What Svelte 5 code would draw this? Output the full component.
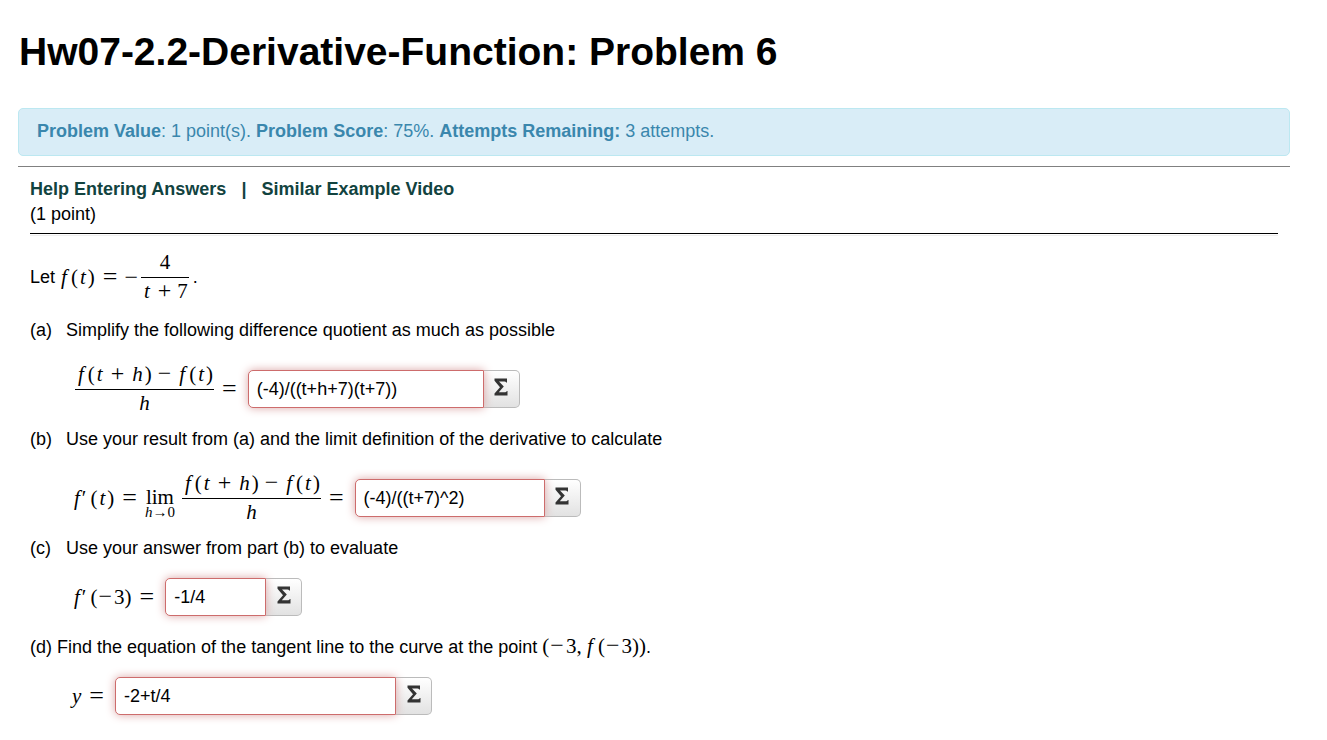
<script lang="ts">
  let answers = $state({
    quotient: '(-4)/((t+h+7)(t+7))',
    derivative: '(-4)/((t+7)^2)',
    value: '-1/4',
    tangent: '-2+t/4',
  });

  type AnswerKey = keyof typeof answers;
</script>

{#snippet quotient()}
  <span class="frac">
    <span class="num">
      <i class="f">f</i>(<i>t</i><span class="op">+</span><i>h</i>)<span class="op">−</span><i class="f">f</i>(<i>t</i>)
    </span>
    <span class="den"><i>h</i></span>
  </span>
{/snippet}

{#snippet answer(key: AnswerKey, label: string, width: number)}
  <span class="answer">
    <input
      type="text"
      aria-label={label}
      autocomplete="off"
      spellcheck="false"
      style:width="{width}px"
      bind:value={answers[key]}
    />
    <button type="button" aria-label="Equation editor for {label}">
      <svg viewBox="0 0 14 18" width="14" height="18" aria-hidden="true">
        <path d="M0.5 0.5H13V4.6H12.2Q11.8 3.4 10.4 3.4H5L9.8 8.6L4.8 14.2H11Q12.4 14.2 12.8 13H13.5V17.5H0.5V15.4L6 9.2L0.5 2.8Z" />
      </svg>
    </button>
  </span>
{/snippet}

<main>
  <h1>Hw07-2.2-Derivative-Function: Problem 6</h1>

  <div class="alert">
    <b>Problem Value</b>: 1 point(s). <b>Problem Score</b>: 75%. <b>Attempts Remaining:</b> 3 attempts.
  </div>

  <section class="problem">
    <nav>
      <a href="#help">Help Entering Answers</a>
      <span class="bar">|</span>
      <a href="#video">Similar Example Video</a>
    </nav>
    <p>(1 point)</p>
    <hr />

    <div class="given">
      Let
      <span class="math">
        <span><i class="f">f</i>(<i>t</i>)</span>
        <span class="rel">=</span>
        <span class="neg">−</span>
        <span class="frac">
          <span class="num">4</span>
          <span class="den"><i>t</i><span class="op">+</span>7</span>
        </span>
      </span>
      <span>.</span>
    </div>

    <p><span class="part">(a)</span>Simplify the following difference quotient as much as possible</p>
    <div class="row tall">
      <span class="math">
        {@render quotient()}
        <span class="rel">=</span>
      </span>
      {@render answer('quotient', 'difference quotient', 236)}
    </div>

    <p><span class="part">(b)</span>Use your result from (a) and the limit definition of the derivative to calculate</p>
    <div class="row tall">
      <span class="math">
        <span><i class="f">f</i><span class="prime">′</span>(<i>t</i>)</span>
        <span class="rel">=</span>
        <span class="lim">
          lim
          <small><i class="tight">h</i>→0</small>
        </span>
        {@render quotient()}
        <span class="rel">=</span>
      </span>
      {@render answer('derivative', 'derivative', 190)}
    </div>

    <p><span class="part">(c)</span>Use your answer from part (b) to evaluate</p>
    <div class="row">
      <span class="math">
        <span><i class="f">f</i><span class="prime">′</span>(<span class="minus">−</span>3)</span>
        <span class="rel">=</span>
      </span>
      {@render answer('value', 'derivative at -3', 101)}
    </div>

    <p>
      (d) Find the equation of the tangent line to the curve at the point
      <span class="inline">(<span class="minus">−</span>3, <i class="tight">f</i> (<span class="minus">−</span>3))</span>.
    </p>
    <div class="row">
      <span class="math">
        <i class="tight">y</i>
        <span class="rel">=</span>
      </span>
      {@render answer('tangent', 'tangent line', 281)}
    </div>
  </section>
</main>

<style>
  :global(body) {
    margin: 0;
    background: #fff;
  }

  main {
    padding: 24px 37px 24px 18px;
    color: #000;
    font-family: 'Liberation Sans', Arial, sans-serif;
    font-size: 18px;
    line-height: 26px;
  }

  h1 {
    margin: 0 0 28px;
    padding-left: 1px;
    font-size: 39px;
    line-height: 56px;
  }

  .alert {
    padding: 9px 18px 11px;
    border: 1px solid #bce8f1;
    border-radius: 5px;
    background: #d9edf7;
    color: #3a87ad;
  }

  .problem {
    margin-top: 10px;
    padding: 10px 12px 0;
    border-top: 1px solid #808080;
  }

  nav {
    display: flex;
    gap: 15px;
    line-height: 24px;
    font-weight: bold;
  }

  a,
  .bar {
    color: #12433f;
    text-decoration: none;
  }

  p {
    margin: 0;
  }

  hr {
    height: 1px;
    margin: 6px 0 0;
    border: 0;
    border-top: 1px solid #000;
    border-bottom: 1px solid #eee;
  }

  .given {
    display: flex;
    align-items: center;
    gap: 4px;
    height: 58px;
    margin: 12px 0 11px;
  }

  .part {
    display: inline-block;
    width: 36px;
  }

  .row {
    display: flex;
    align-items: center;
    gap: 11px;
    min-height: 38px;
    margin: 17px 0;
    padding-left: 42px;
  }

  .row.tall {
    min-height: 58px;
    margin: 17px 0 8px;
  }

  .math,
  .inline {
    font-family: 'Liberation Serif', 'Times New Roman', serif;
    font-size: 21px;
    white-space: nowrap;
  }

  .math {
    display: inline-flex;
    align-items: center;
    line-height: 26px;
  }

  .inline {
    line-height: 24px;
  }

  i {
    padding: 0 2px;
  }

  .f {
    padding: 0 4px 0 2px;
  }

  .tight {
    padding: 0;
  }

  .prime {
    margin-left: -2px;
    padding-right: 4px;
  }

  .op,
  .neg,
  .minus {
    font-size: 24px;
    line-height: 24px;
  }

  .op {
    padding: 0 6px;
  }

  .minus {
    padding: 0 2px 0 1px;
  }

  .rel {
    margin-left: 8px;
    font-size: 26px;
    line-height: 24px;
  }

  .neg {
    margin-left: 7px;
  }

  .frac {
    display: inline-flex;
    flex-direction: column;
    margin-left: 3px;
  }

  .num,
  .den {
    height: 28px;
    padding: 0 1px;
    text-align: center;
  }

  .num {
    border-bottom: 1px solid #000;
  }

  .lim {
    display: inline-flex;
    flex-direction: column;
    align-items: center;
    margin: 12px 4px 0 8px;
    line-height: 16px;
  }

  .lim small {
    font-size: 15px;
    line-height: 14px;
  }

  .answer {
    display: inline-flex;
  }

  /* The red glow of the field spreads over its button */
  .answer input {
    position: relative;
    box-sizing: border-box;
    height: 38px;
    margin: 0;
    padding: 0 8px;
    border: 1px solid #cd6c6c;
    border-radius: 5px 0 0 5px;
    outline: 0;
    background: #fff;
    box-shadow: 0 0 10px #dba5a5;
    color: #000;
    font: inherit;
  }

  .answer button {
    display: flex;
    align-items: center;
    justify-content: center;
    width: 36px;
    height: 38px;
    padding: 0 0 4px;
    border: 1px solid #bbb;
    border-left: 0;
    border-radius: 0 5px 5px 0;
    background: linear-gradient(#fff, #e2e2e2);
    cursor: pointer;
  }

  svg {
    fill: #333;
  }
</style>
